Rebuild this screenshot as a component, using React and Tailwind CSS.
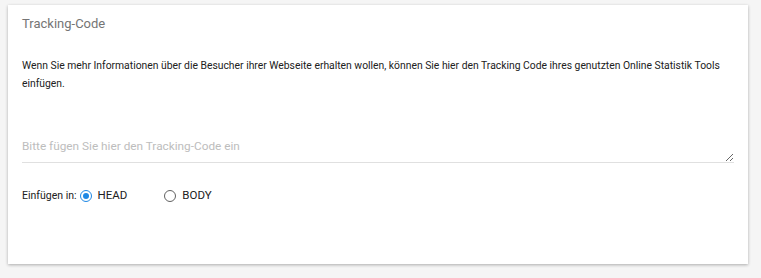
export default function App() {
    return (
        <div className="min-h-screen bg-[#f5f5f5] pt-[5px] pl-[8px] font-['Roboto',sans-serif]">
            {/* Karte Tracking-Code */}
            <div className="w-[740px] h-[259px] bg-white shadow-[0_1px_3px_rgba(0,0,0,0.3)] px-[14px] pt-[10px]">
                <h2 className="text-[13px] leading-[18px] text-[#757575] font-normal">Tracking-Code</h2>
                <p className="mt-[24px] text-[10.35px] leading-[18px] text-[#212121]">
                    Wenn Sie mehr Informationen über die Besucher ihrer Webseite erhalten wollen, können Sie hier den Tracking Code ihres genutzten Online Statistik Tools einfügen.
                </p>
                <textarea
                    placeholder="Bitte fügen Sie hier den Tracking-Code ein"
                    className="block mt-[41px] w-[712px] h-[29px] border-b border-[#e0e0e0] text-[11.8px] leading-[18px] text-[#212121] placeholder:text-[#bdbdbd] focus:outline-none pt-[3px]"
                />
                <div className="mt-[24px] flex items-center text-[10.5px] text-[#212121]">
                    <span>Einfügen in:</span>
                    <label className="ml-[3px] flex items-center gap-[6px] text-[11.5px]">
                        <span className="w-[12px] h-[12px] rounded-full border-[1.5px] border-[#1e88e5] flex items-center justify-center">
                            <span className="w-[6px] h-[6px] rounded-full bg-[#1e88e5]" />
                        </span>
                        HEAD
                    </label>
                    <label className="ml-[37px] flex items-center gap-[6px] text-[11.5px]">
                        <span className="w-[12px] h-[12px] rounded-full border-[1.5px] border-[#616161]" />
                        BODY
                    </label>
                </div>
            </div>
        </div>
    );
}
